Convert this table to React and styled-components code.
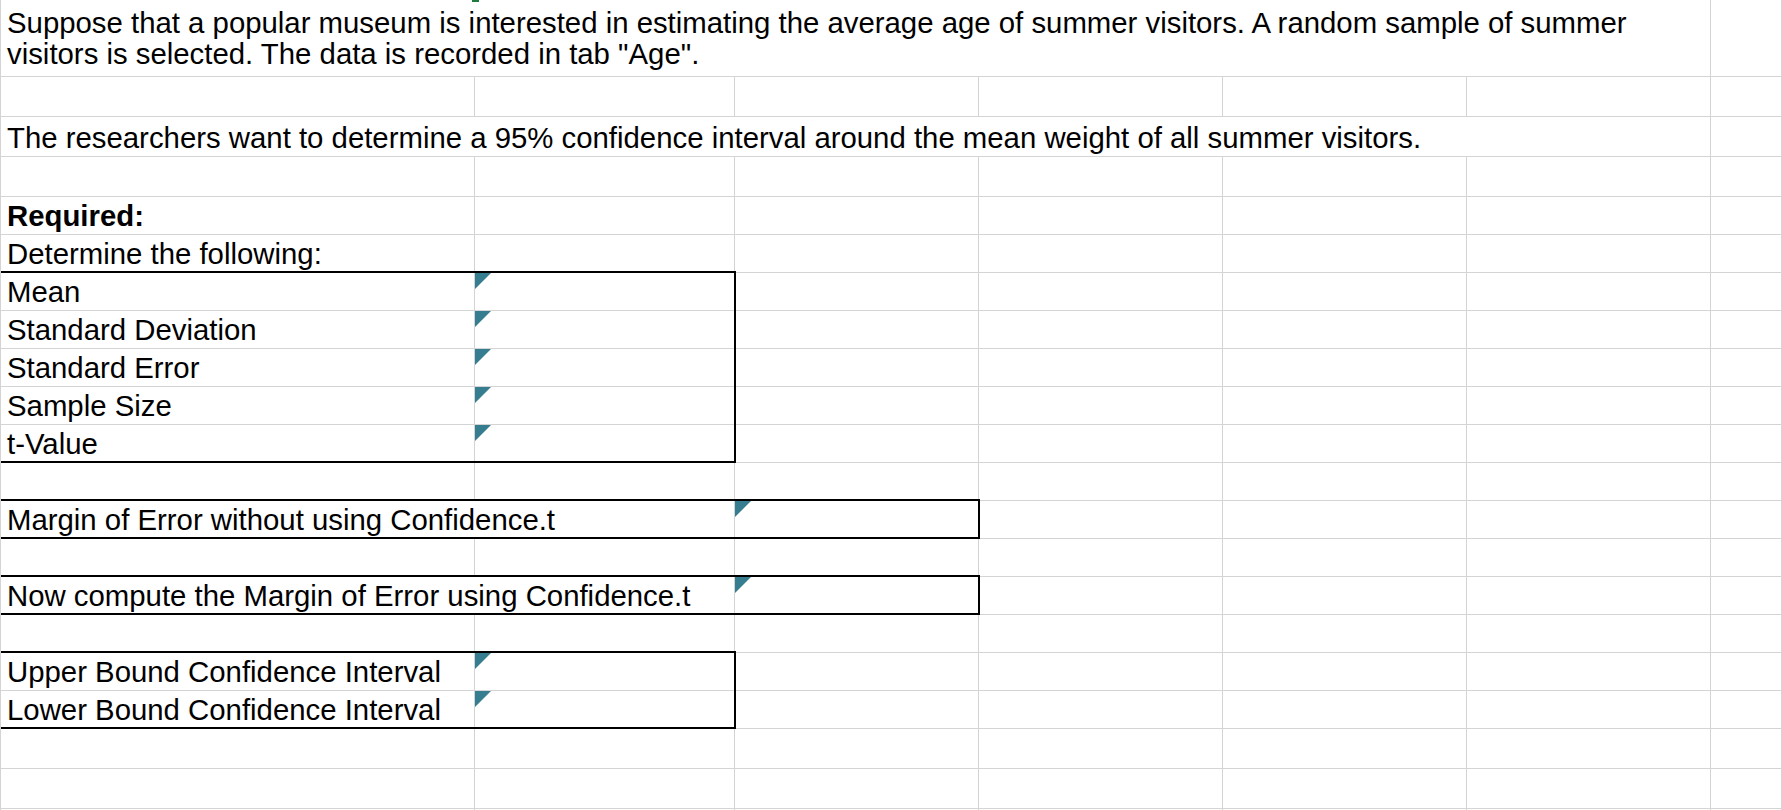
import React from "react";
import styled, { createGlobalStyle, css } from "styled-components";

const GRID = "#d4d4d4";
const NOTE = "#367e8f";

const GlobalStyle = createGlobalStyle`
  html, body {
    margin: 0;
    padding: 0;
    background: #fff;
  }
  body {
    overflow: hidden;
  }
`;

const tracks = css`
  display: grid;
  grid-template-columns: 474px 260px 244px 244px 244px 244px 1fr;
  grid-template-rows: 77px 40px 40px 40px repeat(14, 38px) 40px 40px 40px;
`;

const Sheet = styled.div`
  position: relative;
  display: grid;
  width: 1782px;
  height: 810px;
  box-sizing: border-box;
  overflow: hidden;
  border-left: 1px solid ${GRID};
  font-family: "Liberation Sans", Arial, Helvetica, sans-serif;
  font-size: 29.35px;
  color: #000;
`;

const Cells = styled.div`
  ${tracks};
  grid-area: 1 / 1;
`;

const Frames = styled.div`
  ${tracks};
  grid-area: 1 / 1;
  pointer-events: none;
`;

const Cell = styled.div`
  grid-column: span ${(p) => p.$span || 1};
  box-sizing: border-box;
  min-width: 0;
  border-right: 1px solid ${GRID};
  border-bottom: 1px solid ${GRID};
  display: flex;
  align-items: flex-end;
  padding: 0 0 1px 6px;
  white-space: nowrap;
  font-weight: ${(p) => (p.$bold ? 700 : 400)};
`;

const NoteCell = styled(Cell)`
  align-items: flex-start;
  padding: 0;
`;

const IntroCell = styled(Cell)`
  align-items: center;
  padding: 0 0 0 6px;
  line-height: 31px;
`;

const NoteMark = styled.span`
  display: block;
  width: 16px;
  height: 16px;
  background: ${NOTE};
  clip-path: polygon(0 0, 100% 0, 0 100%);
`;

const Frame = styled.div`
  grid-row: ${(p) => p.$rows};
  grid-column: ${(p) => p.$cols};
  margin: -2px -1px 0 0;
  border-top: 2px solid #000;
  border-right: 2px solid #000;
  border-bottom: 2px solid #000;
`;

const SelectionTick = styled.div`
  position: absolute;
  top: 0;
  left: 471px;
  width: 7px;
  height: 2px;
  background: #1f7a3e;
`;

const COLS = 7;

const rows = [
  {
    intro: [
      "Suppose that a popular museum is interested in estimating the average age of summer visitors. A random sample of summer",
      'visitors is selected. The data is recorded in tab "Age".',
    ],
  },
  {},
  { wide: "The researchers want to determine a 95% confidence interval around the mean weight of all summer visitors." },
  {},
  { label: "Required:", bold: true },
  { label: "Determine the following:" },
  { label: "Mean", note: 1 },
  { label: "Standard Deviation", note: 1 },
  { label: "Standard Error", note: 1 },
  { label: "Sample Size", note: 1 },
  { label: "t-Value", note: 1 },
  {},
  { label: "Margin of Error without using Confidence.t", span: 2, note: 2 },
  {},
  { label: "Now compute the Margin of Error using Confidence.t", span: 2, note: 2 },
  {},
  { label: "Upper Bound Confidence Interval", note: 1 },
  { label: "Lower Bound Confidence Interval", note: 1 },
  {},
  {},
  {},
];

const frames = [
  { rows: "7 / 12", cols: "1 / 3" },
  { rows: "13 / 14", cols: "1 / 4" },
  { rows: "15 / 16", cols: "1 / 4" },
  { rows: "17 / 19", cols: "1 / 3" },
];

const SheetRow = ({ row }) => {
  const out = [];
  let col = 0;

  if (row.intro) {
    out.push(
      <IntroCell key="intro" $span={6}>
        <span>
          {row.intro[0]}
          <br />
          {row.intro[1]}
        </span>
      </IntroCell>
    );
    col = 6;
  } else if (row.wide) {
    out.push(
      <Cell key="wide" $span={6}>
        {row.wide}
      </Cell>
    );
    col = 6;
  } else if (row.label) {
    const span = row.span || 1;
    out.push(
      <Cell key="label" $span={span} $bold={row.bold}>
        {row.label}
      </Cell>
    );
    col = span;
  }

  for (; col < COLS; col++) {
    if (row.note === col) {
      out.push(
        <NoteCell key={`c${col}`}>
          <NoteMark />
        </NoteCell>
      );
    } else {
      out.push(<Cell key={`c${col}`} />);
    }
  }

  return <>{out}</>;
};

const App = () => {
  return (
    <>
      <GlobalStyle />
      <Sheet>
        <Cells>
          {rows.map((row, index) => (
            <SheetRow row={row} key={index} />
          ))}
        </Cells>
        <Frames>
          {frames.map((f, index) => (
            <Frame key={index} $rows={f.rows} $cols={f.cols} />
          ))}
        </Frames>
        <SelectionTick />
      </Sheet>
    </>
  );
};

export default App;
